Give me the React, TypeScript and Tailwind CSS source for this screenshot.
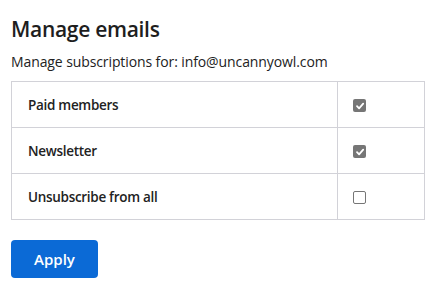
import React from "react";

function Check({ checked }: { checked: boolean }) {
  if (checked) {
    return (
      <span className="inline-flex h-[13px] w-[13px] items-center justify-center rounded-[2px] bg-[#767676]">
        <svg width="10" height="10" viewBox="0 0 10 10">
          <path d="M2 5.2 L4.1 7.3 L8.2 2.6" stroke="white" strokeWidth="1.8" fill="none" strokeLinecap="round" strokeLinejoin="round" />
        </svg>
      </span>
    );
  }
  return <span className="inline-block h-[13px] w-[13px] rounded-[2px] border border-[#767676] bg-white" />;
}

const rows = [
  { label: "Paid members", checked: true },
  { label: "Newsletter", checked: true },
  { label: "Unsubscribe from all", checked: false },
];

export default function App() {
  return (
    <div className="h-[291px] w-[436px] bg-white px-[11px] pt-[14px] text-[#222222]" style={{ fontFamily: '"Open Sans", "Noto Sans", sans-serif' }}>
      <h1 className="text-[21px] font-semibold leading-[30px] text-[#1e1e1e] tracking-[-0.3px]">Manage emails</h1>
      <p className="mt-[8px] text-[14px] leading-[20px] tracking-[-0.1px] text-[#222]">Manage subscriptions for: info@uncannyowl.com</p>
      <table className="mt-[9px] w-[414px] border-collapse">
        <tbody>
          {rows.map((r) => (
            <tr key={r.label} className="h-[46px]">
              <td className="border border-[#d2d2d8] pl-[16px] pt-[2px] text-[13.5px] font-semibold tracking-[-0.3px]">{r.label}</td>
              <td className="w-[87px] border border-[#d2d2d8] pl-[15px] align-middle">
                <div className="flex items-center pt-[2px]"><Check checked={r.checked} /></div>
              </td>
            </tr>
          ))}
        </tbody>
      </table>
      <button className="mt-[20px] flex h-[38px] w-[87px] items-center justify-center rounded-[4px] bg-[#0b6ad6] text-[15px] font-semibold text-white">
        Apply
      </button>
    </div>
  );
}
